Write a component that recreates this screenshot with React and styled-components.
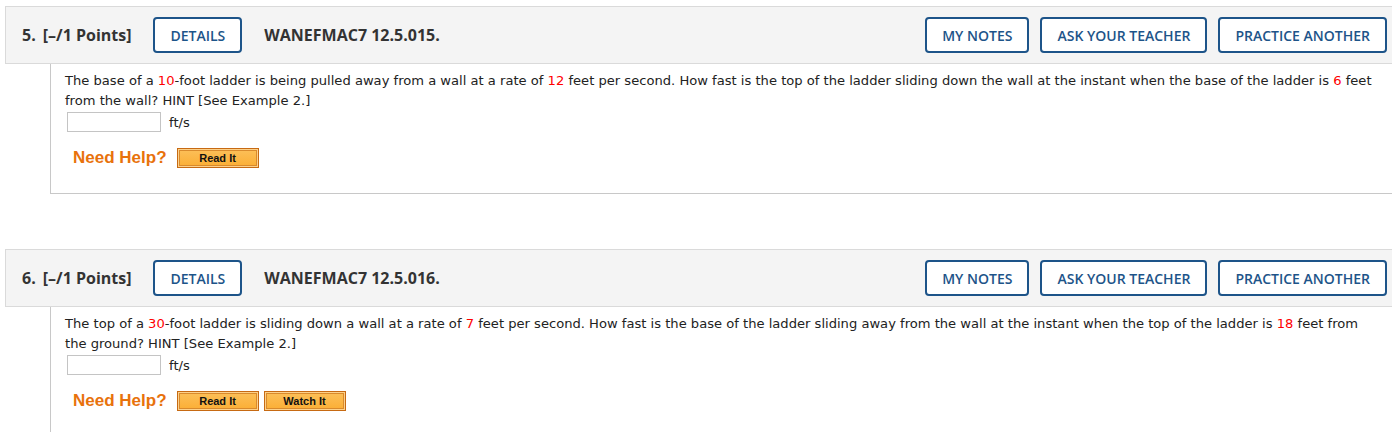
import styled, { createGlobalStyle } from "styled-components";

const GlobalStyle = createGlobalStyle`
  body {
    margin: 0;
    background: #fff;
  }
`;

const questions = [
  {
    num: "5.",
    code: "WANEFMAC7 12.5.015.",
    text: [
      "The base of a ",
      { red: "10" },
      "-foot ladder is being pulled away from a wall at a rate of ",
      { red: "12" },
      " feet per second. How fast is the top of the ladder sliding down the wall at the instant when the base of the ladder is ",
      { red: "6" },
      " feet from the wall? HINT [See Example 2.]",
    ],
    watch: false,
  },
  {
    num: "6.",
    code: "WANEFMAC7 12.5.016.",
    text: [
      "The top of a ",
      { red: "30" },
      "-foot ladder is sliding down a wall at a rate of ",
      { red: "7" },
      " feet per second. How fast is the base of the ladder sliding away from the wall at the instant when the top of the ladder is ",
      { red: "18" },
      " feet from the ground? HINT [See Example 2.]",
    ],
    watch: true,
  },
];

const Question = ({ q }) => (
  <Wrapper>
    <HeaderBar>
      <Num>{q.num}</Num>
      <Points>[–/1 Points]</Points>
      <OutlineButton>DETAILS</OutlineButton>
      <Code>{q.code}</Code>
      <Spacer />
      <OutlineButton>MY NOTES</OutlineButton>
      <OutlineButton>ASK YOUR TEACHER</OutlineButton>
      <OutlineButton>PRACTICE ANOTHER</OutlineButton>
    </HeaderBar>
    <Body>
      <QuestionText>
        {q.text.map((part, i) =>
          typeof part === "string" ? part : <Red key={i}>{part.red}</Red>
        )}
      </QuestionText>
      <AnswerRow>
        <AnswerInput type="text" />
        <Unit>ft/s</Unit>
      </AnswerRow>
      <HelpRow>
        <NeedHelp>Need Help?</NeedHelp>
        <HelpButton>Read It</HelpButton>
        {q.watch && <HelpButton>Watch It</HelpButton>}
      </HelpRow>
    </Body>
  </Wrapper>
);

const App = () => {
  return (
    <Page>
      <GlobalStyle />
      {questions.map((q) => (
        <Question key={q.num} q={q} />
      ))}
    </Page>
  );
};

const Page = styled.div`
  padding: 6px 0 0 5px;
  display: flex;
  flex-direction: column;
  gap: 55px;
`;

const Wrapper = styled.div`
  display: flex;
  flex-direction: column;
`;

const HeaderBar = styled.div`
  display: flex;
  align-items: center;
  height: 56px;
  background: #f4f4f4;
  border: 1px solid #dadada;
  border-right: none;
  padding: 0 5px 0 16px;
  font-family: "Open Sans", sans-serif;
  color: #333;
`;

const Num = styled.span`
  font-size: 16px;
  font-weight: 700;
  margin-right: 7px;
`;

const Points = styled.span`
  font-size: 16px;
  font-weight: 700;
  margin-right: 22px;
`;

const Code = styled.span`
  font-size: 16px;
  font-weight: 700;
  margin-left: 22px;
`;

const Spacer = styled.div`
  flex: 1;
`;

const OutlineButton = styled.button`
  height: 36px;
  padding: 0 15px;
  margin-left: 11px;
  background: #fff;
  border: 2px solid #1d5489;
  border-radius: 4px;
  color: #1d5489;
  font-family: "Open Sans", sans-serif;
  font-size: 14px;
  font-weight: 600;
  cursor: pointer;

  &:first-of-type {
    margin-left: 0;
  }
`;

const Body = styled.div`
  margin-left: 45px;
  border-left: 1px solid #c8c8c8;
  border-bottom: 1px solid #c8c8c8;
  padding: 7px 20px 25px 14px;
  font-family: Verdana, "DejaVu Sans", sans-serif;
  font-size: 13.1px;
  color: #222;
`;

const QuestionText = styled.p`
  margin: 0;
  line-height: 20px;
`;

const Red = styled.span`
  color: #f00;
`;

const AnswerRow = styled.div`
  display: flex;
  align-items: center;
  margin-top: 1px;
  padding-left: 2px;
`;

const AnswerInput = styled.input`
  width: 94px;
  height: 20px;
  box-sizing: border-box;
  border: 1px solid #c4c4c4;
  margin: 0;
`;

const Unit = styled.span`
  margin-left: 8px;
`;

const HelpRow = styled.div`
  display: flex;
  align-items: center;
  gap: 5px;
  margin-top: 16px;
  padding-left: 8px;
`;

const NeedHelp = styled.span`
  font-family: "Liberation Sans", Arial, sans-serif;
  font-size: 17px;
  font-weight: 700;
  color: #e8720c;
  margin-right: 5px;
`;

const HelpButton = styled.button`
  width: 82px;
  height: 20px;
  padding: 0;
  background: linear-gradient(#fcc05a, #fbae34);
  border: 1px solid #c76a13;
  box-shadow: inset 0 0 0 1px #fdd18a, inset 0 0 0 2px #d98a2c;
  font-family: "Liberation Sans", Arial, sans-serif;
  font-size: 11px;
  font-weight: 700;
  color: #111;
  cursor: pointer;
`;

export default App;
